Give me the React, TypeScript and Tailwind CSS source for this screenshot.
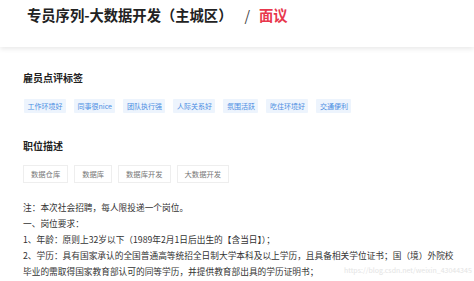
import React from 'react';

const reviewTags = ['工作环境好', '同事很nice', '团队执行强', '人际关系好', '氛围活跃', '吃住环境好', '交通便利'];
const skillTags = ['数据仓库', '数据库', '数据库开发', '大数据开发'];

const App = () => {
  return (
    <div
      className="relative w-[474px] h-[281px] overflow-hidden bg-white text-[#333]"
      style={{ fontFamily: '"Noto Sans CJK SC", "Noto Sans", sans-serif' }}
    >
      {/* Header */}
      <header className="h-[47px] bg-white shadow-[0_2px_5px_rgba(0,0,0,0.09)] pl-[27px] pt-[6px]">
        <div className="flex items-center h-[18px] text-[14.3px] font-bold leading-[18px]">
          <span className="text-[#222]">专员序列-大数据开发（主城区）</span>
          <span className="ml-[12px] font-normal text-[#444]">/</span>
          <span className="ml-[9px] text-[#e8384d]">面议</span>
        </div>
      </header>

      <main className="pl-[23px]">
        {/* Review tags */}
        <h3 className="mt-[24px] text-[10px] font-bold leading-[14px] text-[#222]">雇员点评标签</h3>
        <div className="mt-[14px] ml-px flex gap-[8px]">
          {reviewTags.map((tag) => (
            <span
              key={tag}
              className="h-[14px] px-[3.5px] bg-[#edf4fd] text-[#4a8de2] text-[7px] leading-[14px] rounded-[1px]"
            >
              {tag}
            </span>
          ))}
        </div>

        {/* Job description */}
        <h3 className="mt-[26px] text-[10px] font-bold leading-[14px] text-[#222]">职位描述</h3>
        <div className="mt-[12px] flex gap-[6px]">
          {skillTags.map((tag) => (
            <span
              key={tag}
              className="h-[18px] px-[7px] border border-[#eeeeee] text-[#777] text-[7.3px] leading-[16px]"
            >
              {tag}
            </span>
          ))}
        </div>

        <div className="mt-[17px] w-[440px] text-[8.7px] leading-[16px] text-[#333] whitespace-nowrap">
          <p>注：本次社会招聘，每人限投递一个岗位。</p>
          <p>一、岗位要求：</p>
          <p>1、年龄：原则上32岁以下（1989年2月1日后出生的【含当日】）；</p>
          <p>
            <span>2、学历：具有国家承认的全国普通高等统招全日制大学本科及以上学历，且具备相关学位证书；国（境）外院校</span>
            <br />
            <span>毕业的需取得国家教育部认可的同等学历，并提供教育部出具的学历证明书；</span>
          </p>
        </div>
      </main>

      {/* watermark */}
      <span className="absolute left-[344px] top-[266px] text-[7px] leading-[9px] text-[#e4e4e4]">
        https://blog.csdn.net/weixin_43044345
      </span>
    </div>
  );
};

export default App;
